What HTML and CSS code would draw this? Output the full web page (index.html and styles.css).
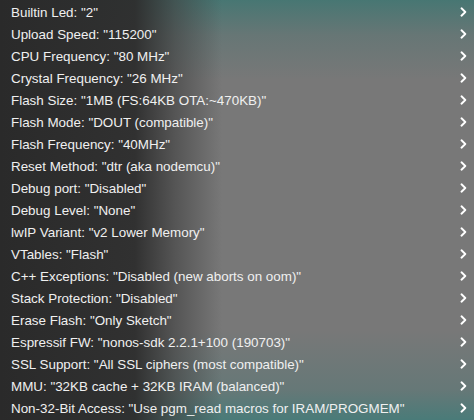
FILE: index.html
```html
<!DOCTYPE html>
<html>
<head>
<meta charset="utf-8">
<link rel="stylesheet" href="styles.css">
</head>
<body>
<ul class="menu">
  <li class="item"><span class="label">Builtin Led: "2"</span><svg class="chev" viewBox="0 0 7 10"><path d="M1.5 1.3 L5.3 5 L1.5 8.7"/></svg></li>
  <li class="item"><span class="label">Upload Speed: "115200"</span><svg class="chev" viewBox="0 0 7 10"><path d="M1.5 1.3 L5.3 5 L1.5 8.7"/></svg></li>
  <li class="item"><span class="label">CPU Frequency: "80 MHz"</span><svg class="chev" viewBox="0 0 7 10"><path d="M1.5 1.3 L5.3 5 L1.5 8.7"/></svg></li>
  <li class="item"><span class="label">Crystal Frequency: "26 MHz"</span><svg class="chev" viewBox="0 0 7 10"><path d="M1.5 1.3 L5.3 5 L1.5 8.7"/></svg></li>
  <li class="item"><span class="label">Flash Size: "1MB (FS:64KB OTA:~470KB)"</span><svg class="chev" viewBox="0 0 7 10"><path d="M1.5 1.3 L5.3 5 L1.5 8.7"/></svg></li>
  <li class="item"><span class="label">Flash Mode: "DOUT (compatible)"</span><svg class="chev" viewBox="0 0 7 10"><path d="M1.5 1.3 L5.3 5 L1.5 8.7"/></svg></li>
  <li class="item"><span class="label">Flash Frequency: "40MHz"</span><svg class="chev" viewBox="0 0 7 10"><path d="M1.5 1.3 L5.3 5 L1.5 8.7"/></svg></li>
  <li class="item"><span class="label">Reset Method: "dtr (aka nodemcu)"</span><svg class="chev" viewBox="0 0 7 10"><path d="M1.5 1.3 L5.3 5 L1.5 8.7"/></svg></li>
  <li class="item"><span class="label">Debug port: "Disabled"</span><svg class="chev" viewBox="0 0 7 10"><path d="M1.5 1.3 L5.3 5 L1.5 8.7"/></svg></li>
  <li class="item"><span class="label">Debug Level: "None"</span><svg class="chev" viewBox="0 0 7 10"><path d="M1.5 1.3 L5.3 5 L1.5 8.7"/></svg></li>
  <li class="item"><span class="label">lwIP Variant: "v2 Lower Memory"</span><svg class="chev" viewBox="0 0 7 10"><path d="M1.5 1.3 L5.3 5 L1.5 8.7"/></svg></li>
  <li class="item"><span class="label">VTables: "Flash"</span><svg class="chev" viewBox="0 0 7 10"><path d="M1.5 1.3 L5.3 5 L1.5 8.7"/></svg></li>
  <li class="item"><span class="label">C++ Exceptions: "Disabled (new aborts on oom)"</span><svg class="chev" viewBox="0 0 7 10"><path d="M1.5 1.3 L5.3 5 L1.5 8.7"/></svg></li>
  <li class="item"><span class="label">Stack Protection: "Disabled"</span><svg class="chev" viewBox="0 0 7 10"><path d="M1.5 1.3 L5.3 5 L1.5 8.7"/></svg></li>
  <li class="item"><span class="label">Erase Flash: "Only Sketch"</span><svg class="chev" viewBox="0 0 7 10"><path d="M1.5 1.3 L5.3 5 L1.5 8.7"/></svg></li>
  <li class="item"><span class="label">Espressif FW: "nonos-sdk 2.2.1+100 (190703)"</span><svg class="chev" viewBox="0 0 7 10"><path d="M1.5 1.3 L5.3 5 L1.5 8.7"/></svg></li>
  <li class="item"><span class="label">SSL Support: "All SSL ciphers (most compatible)"</span><svg class="chev" viewBox="0 0 7 10"><path d="M1.5 1.3 L5.3 5 L1.5 8.7"/></svg></li>
  <li class="item"><span class="label">MMU: "32KB cache + 32KB IRAM (balanced)"</span><svg class="chev" viewBox="0 0 7 10"><path d="M1.5 1.3 L5.3 5 L1.5 8.7"/></svg></li>
  <li class="item"><span class="label">Non-32-Bit Access: "Use pgm_read macros for IRAM/PROGMEM"</span><svg class="chev" viewBox="0 0 7 10"><path d="M1.5 1.3 L5.3 5 L1.5 8.7"/></svg></li>
</ul>
</body>
</html>
```
FILE: styles.css
```css
html, body {
  margin: 0;
  padding: 0;
  width: 474px;
  height: 420px;
  overflow: hidden;
}
body {
  background:
    linear-gradient(to right, rgba(42,42,42,1) 0px, rgba(46,46,46,0.96) 135px, rgba(62,62,62,0.6) 175px, rgba(70,70,70,0) 222px),
    linear-gradient(to bottom, rgba(55,118,113,0.75) 0px, rgba(70,115,112,0.35) 35px, rgba(100,110,110,0) 80px),
    linear-gradient(to top, rgba(62,124,121,0.8) 0px, rgba(75,120,118,0.4) 30px, rgba(110,115,115,0) 90px),
    #787878;
  font-family: "Liberation Sans", Arial, sans-serif;
}
.menu {
  list-style: none;
  margin: 0;
  padding: 1px 0 0 0;
}
.item {
  display: flex;
  align-items: center;
  justify-content: space-between;
  height: 22px;
  padding: 0 7px 0 11px;
  color: #f0f0f0;
  font-size: 13.4px;
  white-space: nowrap;
}
.chev {
  width: 7px;
  height: 10px;
  fill: none;
  stroke: #ffffff;
  stroke-width: 1.9;
  stroke-linecap: round;
  stroke-linejoin: round;
}
```
